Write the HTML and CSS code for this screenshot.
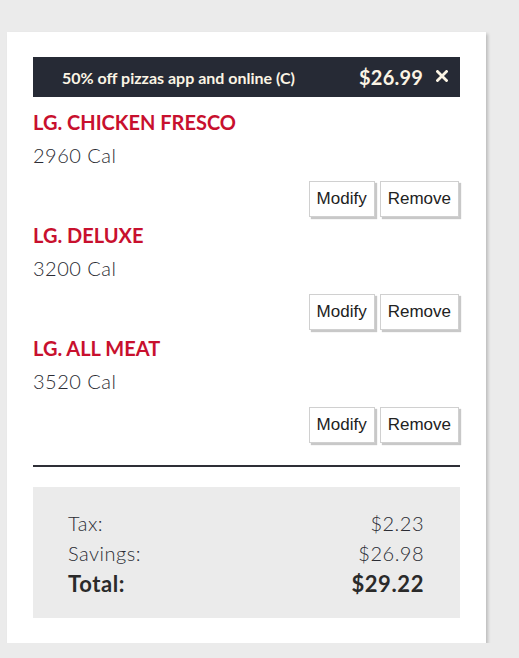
FILE: index.html
```html
<!DOCTYPE html>
<html>
<head>
<meta charset="utf-8">
<link rel="stylesheet" href="styles.css">
</head>
<body>
<div class="card">
  <div class="banner">
    <span class="banner-text">50% off pizzas app and online (C)</span>
    <span class="banner-price">$26.99</span>
    <svg class="banner-close" width="12" height="12" viewBox="0 0 12 12" aria-label="close"><path d="M1.5 1.5 L10.5 10.5 M10.5 1.5 L1.5 10.5" stroke="#fbf4e4" stroke-width="2.8" stroke-linecap="square"/></svg>
  </div>
  <div class="item">
    <div class="item-name">LG. CHICKEN FRESCO</div>
    <div class="item-cal">2960 Cal</div>
    <div class="item-actions"><button class="btn">Modify</button><button class="btn">Remove</button></div>
  </div>
  <div class="item">
    <div class="item-name">LG. DELUXE</div>
    <div class="item-cal">3200 Cal</div>
    <div class="item-actions"><button class="btn">Modify</button><button class="btn">Remove</button></div>
  </div>
  <div class="item">
    <div class="item-name">LG. ALL MEAT</div>
    <div class="item-cal">3520 Cal</div>
    <div class="item-actions"><button class="btn">Modify</button><button class="btn">Remove</button></div>
  </div>
  <div class="divider"></div>
  <div class="summary">
    <div class="row"><span>Tax:</span><span>$2.23</span></div>
    <div class="row"><span>Savings:</span><span>$26.98</span></div>
    <div class="row total"><span>Total:</span><span>$29.22</span></div>
  </div>
</div>
</body>
</html>
```
FILE: styles.css
```css
html, body {
  margin: 0;
  padding: 0;
  background: #ebebeb;
}
body {
  padding: 32px 0 0 7px;
}
.card {
  box-sizing: border-box;
  width: 479px;
  height: 611px;
  background: #fff;
  box-shadow: 2px 2px 3px rgba(0, 0, 0, 0.2);
  padding: 25px 26px;
}
.banner {
  height: 40px;
  background: #262a35;
  display: flex;
  align-items: center;
  padding: 0 12px 0 29px;
  color: #fbf4e4;
  font-family: "Lato", sans-serif;
  font-weight: 700;
}
.banner-text {
  font-size: 16px;
  flex: 1;
}
.banner-price {
  font-size: 20px;
  margin-right: 13px;
  letter-spacing: 0.2px;
}
.banner-close {
  display: block;
  margin-top: -2px;
}
.item {
  display: flex;
  flex-direction: column;
  margin-top: 13px;
}
.item + .item {
  margin-top: 6px;
}
.item-name {
  font-family: "Lato", sans-serif;
  font-weight: 700;
  font-size: 20px;
  line-height: 24px;
  color: #c8102e;
}
.item-cal {
  font-family: "Lato", sans-serif;
  font-weight: 300;
  font-size: 20px;
  line-height: 24px;
  letter-spacing: 0.5px;
  margin-top: 9px;
  color: #2a2b33;
}
.item-actions {
  display: flex;
  justify-content: flex-end;
  gap: 5px;
  margin-top: 14px;
  padding-right: 1px;
}
.btn {
  font-family: "Liberation Sans", Arial, sans-serif;
  font-size: 17px;
  color: #222;
  background: #fff;
  border: 1px solid #d0d0d0;
  box-shadow: 2px 2px 1px #c8c8c8;
  height: 36px;
  padding: 0 7px;
  margin: 0;
}
.divider {
  height: 2px;
  background: #2e2f36;
  margin-top: 22px;
}
.summary {
  margin-top: 20px;
  height: 131px;
  box-sizing: border-box;
  background: #ebebeb;
  padding: 21px 36px 0 35px;
  font-family: "Lato", sans-serif;
  color: #2a2b33;
  font-size: 20px;
  font-weight: 300;
  letter-spacing: 0.5px;
}
.row {
  display: flex;
  justify-content: space-between;
  line-height: 30px;
}
.row.total {
  font-weight: 700;
  font-size: 22px;
  line-height: 32px;
  letter-spacing: 0.6px;
  color: #2a2a2a;
}
```
